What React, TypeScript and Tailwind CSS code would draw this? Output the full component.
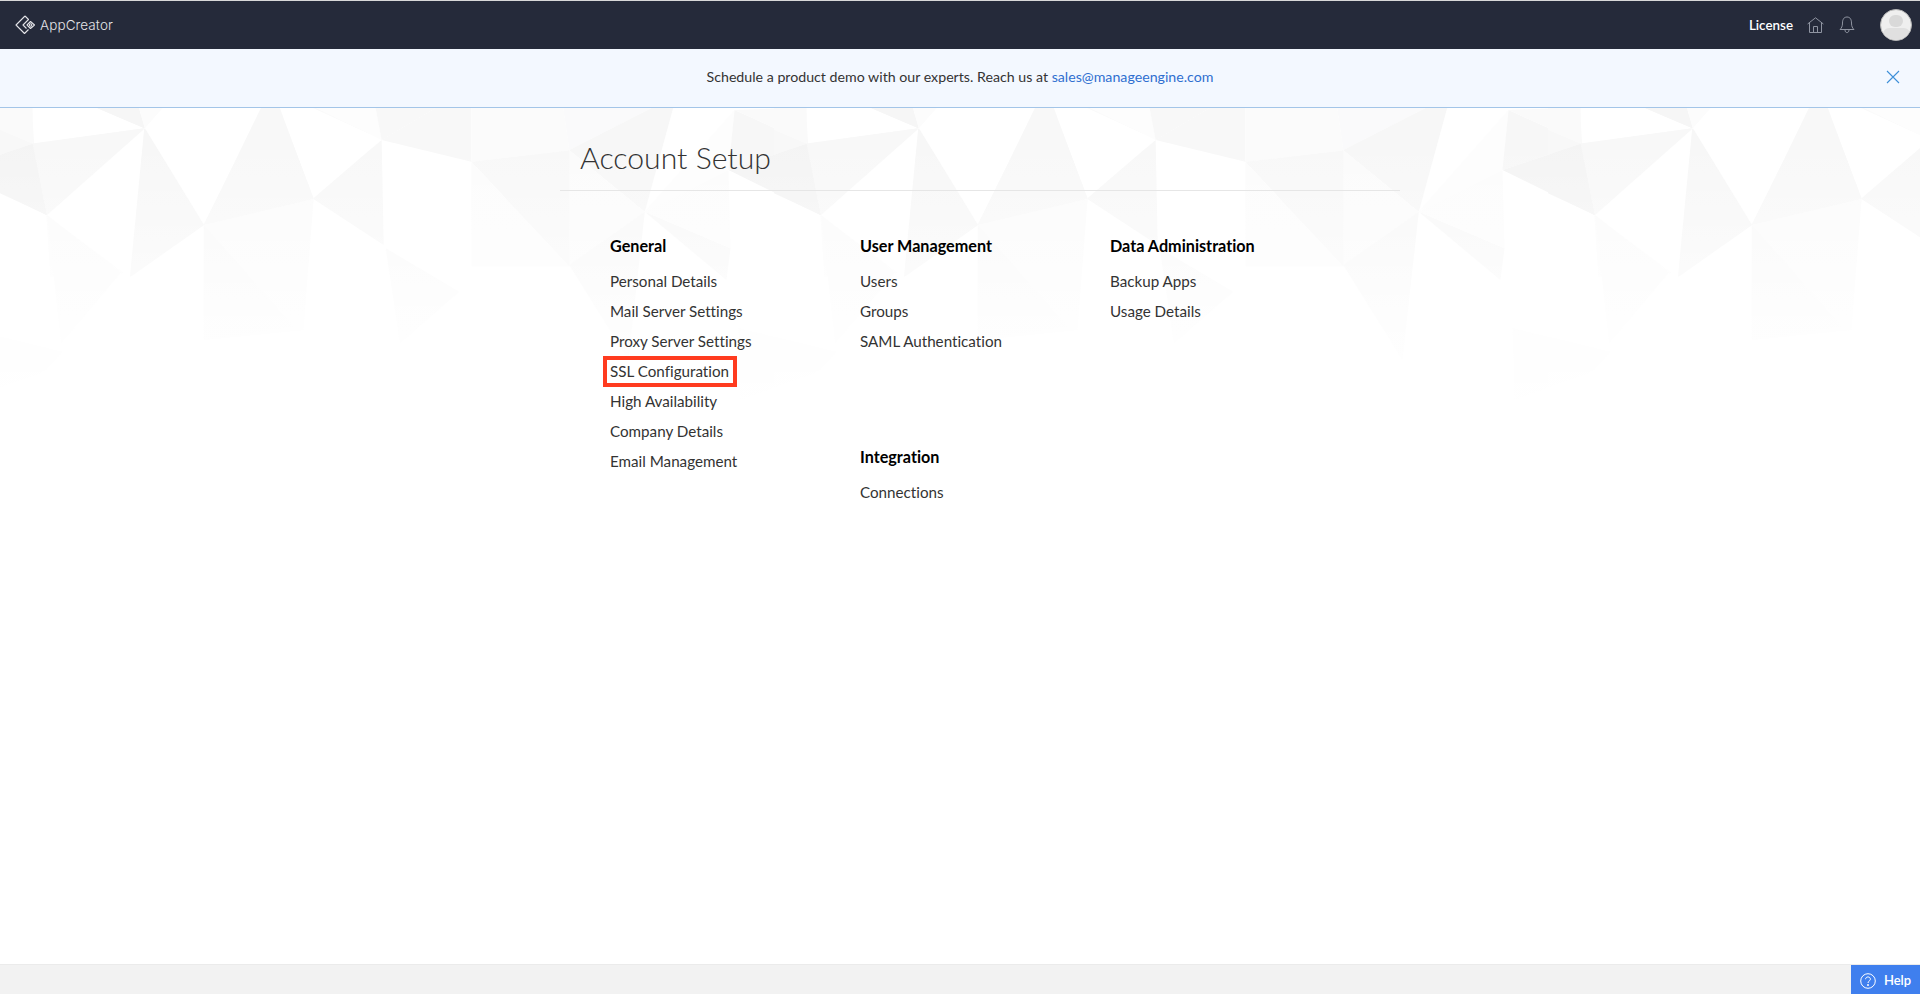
const F5: [string, string][] = [
  ["0,22 80,22 80,132 0,90", "#fafafa"],
  ["0,90 80,132 0,165", "#f8f8f8"],
  ["0,165 80,132 115,345 0,280", "#f4f4f4"],
  ["80,132 355,85 115,345", "#f8f8f8"],
  ["235,22 340,22 355,85", "#f6f6f6"],
  ["340,22 400,22 355,85", "#fcfcfc"],
  ["355,85 500,375 320,530", "#f7f7f7"],
  ["500,375 640,22 685,22 768,297", "#f8f8f8"],
  ["500,375 768,297 740,690 500,720", "#fbfbfb"],
  ["500,375 720,680 500,720", "#f9f9f9"],
  ["768,297 935,120 940,435", "#f8f8f8"],
  ["770,22 920,22 935,120", "#fdfdfd"],
  ["920,22 1070,22 935,120", "#f8f8f8"],
  ["1070,22 1155,22 1155,185 935,120", "#f8f8f8"],
  ["1155,22 1380,22 1395,152 1155,185", "#fbfbfb"],
  ["1155,185 1395,152 1395,500", "#f8f8f8"],
  ["1155,185 1395,500 1155,500", "#fcfcfc"],
  ["115,345 295,520 150,730", "#fbfbfb"],
  ["945,445 1125,575 980,730", "#fafafa"],
  ["0,710 150,755 100,820 0,860", "#fbfbfb"],
];
const F6: [string, string][] = [
  ["0,115 125,22 0,22", "#fbfbfb"],
  ["140,22 360,22 155,150", "#fafafb"],
  ["360,22 410,22 340,335 155,150", "#f7f7f7"],
  ["0,175 155,150 155,495 0,300", "#f8f8f8"],
  ["155,150 340,335 155,495", "#fbfbfb"],
  ["155,495 340,335 300,780", "#f8f8f8"],
  ["340,335 550,445 540,540", "#f8f8f8"],
  ["340,335 545,210 550,445", "#fcfcfc"],
  ["545,210 560,30 340,335", "#fdfdfd"],
  ["560,30 740,130 545,210", "#f7f7f7"],
  ["560,30 735,22 740,130", "#fafafa"],
  ["545,210 740,130 770,345", "#f4f4f4"],
  ["740,130 1010,85 770,345", "#f8f8f8"],
  ["890,22 990,22 1010,85", "#f6f6f6"],
  ["1010,85 1155,375 975,530", "#f7f7f7"],
  ["1155,375 1300,22 1340,22 1425,295", "#f8f8f8"],
  ["1425,295 1568,145 1568,410", "#f8f8f8"],
  ["1155,375 1425,295 1400,690 1155,720", "#fbfbfb"],
  ["1420,22 1568,22 1568,105", "#fafafa"],
  ["570,685 810,755 770,810 575,900", "#fafafa"],
  ["770,345 960,520 780,530", "#fcfcfc"],
];

function Polygons() {
  return (
    <svg className="absolute left-0 top-0 w-full h-[320px]" viewBox="0 0 1920 320" preserveAspectRatio="none" aria-hidden="true">
      <defs>
        <linearGradient id="fade" x1="0" y1="0" x2="0" y2="1">
          <stop offset="0" stopColor="#fff" stopOpacity="0" />
          <stop offset="0.14" stopColor="#fff" stopOpacity="0.05" />
          <stop offset="0.4" stopColor="#fff" stopOpacity="0.35" />
          <stop offset="0.65" stopColor="#fff" stopOpacity="0.75" />
          <stop offset="1" stopColor="#fff" stopOpacity="1" />
        </linearGradient>
      </defs>
      <g transform="translate(0,-8)">
        {[-268, 506, 1280].map((x) => (
          <g key={x} transform={`translate(${x},0) scale(0.40816,0.33333)`}>
            {F6.map(([p, c], i) => <polygon key={i} points={p} fill={c} />)}
          </g>
        ))}
        {[0, 774, 1548].map((x) => (
          <g key={x} transform={`translate(${x},0) scale(0.40816,0.33333)`}>
            {F5.map(([p, c], i) => <polygon key={i} points={p} fill={c} />)}
          </g>
        ))}
      </g>
      <rect x="0" y="0" width="1920" height="320" fill="url(#fade)" />
    </svg>
  );
}

function Section({ title, items, className = "" }: { title: string; items: string[]; className?: string }) {
  return (
    <div className={className}>
      <h3 className="text-[16.2px] leading-[24px] font-bold text-black m-0">{title}</h3>
      <ul className="mt-[8px]">
        {items.map((it) => (
          <li key={it} className="h-[30px] leading-[30px] text-[15.2px] text-[#333] whitespace-nowrap">
            {it === "SSL Configuration" ? (
              <span className="relative">
                {it}
                <span className="absolute left-[-7px] right-[-8px] top-[-6px] bottom-[-7px] border-[4px] border-[#ff3b1f]" />
              </span>
            ) : it}
          </li>
        ))}
      </ul>
    </div>
  );
}

export default function App() {
  return (
    <div className="h-[994px] flex flex-col bg-white font-['Lato',sans-serif] [font-variant-ligatures:none] overflow-hidden">
      <header className="h-[49px] shrink-0 bg-[#252a3a] border-t border-[#d8d8d8] flex items-center pl-[15px] pr-[8px]">
        <svg width="21" height="20" viewBox="0 0 21 20" fill="none" stroke="#e4e4e8" strokeWidth="1.1" strokeLinejoin="round">
          <path d="M10 1 L1 10 L9.5 18.5 L13.5 14.5" />
          <path d="M10 1 L13.5 4.5 L8 10 L11.5 13.5" />
          <path d="M15.5 6.5 L19.5 10 L15.5 13.5 L12 10 Z" />
          <circle cx="15.6" cy="10" r="1.2" />
        </svg>
        <span className="ml-[4px] text-[13.5px] tracking-[0.1px] text-[#e4e4e8] font-['Inter',sans-serif] font-light">AppCreator</span>
        <div className="ml-auto flex items-center">
          <span className="text-[13.4px] font-semibold text-white">License</span>
          <svg className="ml-[14px]" width="17" height="16" viewBox="0 0 17 16" fill="none" stroke="#8f94a1" strokeWidth="1">
            <path d="M0.6 7 L8.5 0.8 L16.4 7 M2.5 5.6 V15.5 H14.5 V5.6 M6.5 15.5 V9.5 H10.5 V15.5" />
          </svg>
          <svg className="ml-[15px]" width="16" height="18" viewBox="0 0 16 18" fill="none" stroke="#8f94a1" strokeWidth="1">
            <path d="M8 1 C4.5 1 3.5 4 3.5 7 C3.5 10.5 2.5 12 1 13.5 H15 C13.5 12 12.5 10.5 12.5 7 C12.5 4 11.5 1 8 1 Z M6 14 C6 17.5 10 17.5 10 14" />
          </svg>
          <div className="ml-[25px] w-[32px] h-[32px] rounded-full bg-[#efefef] border border-[#b5b5b5] overflow-hidden flex flex-col items-center">
            <div className="mt-[5px] w-[14px] h-[15px] rounded-full bg-[#d9d9d9]" />
            <div className="mt-[1px] w-[27px] h-[16px] rounded-full bg-[#e0e0e0]" />
          </div>
        </div>
      </header>

      <div className="h-[59px] shrink-0 bg-[#f3f8ff] border-b border-[#a3c5e8] flex items-center justify-center relative text-[14.2px] text-[#333]">
        <span className="-mt-[3px]">Schedule a product demo with our experts. Reach us at <a className="text-[#2f6fd0]">sales@manageengine.com</a></span>
        <svg className="absolute right-[20px] top-[21px]" width="14" height="14" viewBox="0 0 14 14" stroke="#3d8fd8" strokeWidth="1.1" fill="none">
          <path d="M1 1 L13 13 M13 1 L1 13" />
        </svg>
      </div>

      <main className="flex-1 relative">
        <Polygons />
        <div className="relative w-[840px] ml-[560px]">
          <div className="h-[83px] border-b border-[#e6e6e6] pl-[20px] pt-[27px]">
            <h1 className="text-[30.2px] leading-[48px] font-light text-[#333] m-0 -mt-[2px]">Account Setup</h1>
          </div>
          <div className="flex pl-[50px] pt-[43px]">
            <Section className="w-[250px]" title="General" items={["Personal Details", "Mail Server Settings", "Proxy Server Settings", "SSL Configuration", "High Availability", "Company Details", "Email Management"]} />
            <div className="w-[250px]">
              <Section title="User Management" items={["Users", "Groups", "SAML Authentication"]} />
              <Section className="mt-[89px]" title="Integration" items={["Connections"]} />
            </div>
            <Section className="w-[250px]" title="Data Administration" items={["Backup Apps", "Usage Details"]} />
          </div>
        </div>
      </main>

      <footer className="h-[30px] shrink-0 bg-[#f2f2f2] border-t border-[#ebebeb] flex justify-end">
        <div className="w-[69px] bg-[#3f7fee] flex items-center justify-center gap-[8px] text-white text-[13px] font-semibold pt-[2px]">
          <svg width="16" height="16" viewBox="0 0 16 16" fill="none" stroke="#fff" strokeWidth="1">
            <circle cx="8" cy="8" r="7.3" />
            <path d="M5.6 6.2 C5.6 3.2 10.4 3.2 10.4 6.2 C10.4 8 8 8 8 10" />
            <circle cx="8" cy="12" r="0.6" fill="#fff" />
          </svg>
          <span>Help</span>
        </div>
      </footer>
    </div>
  );
}
